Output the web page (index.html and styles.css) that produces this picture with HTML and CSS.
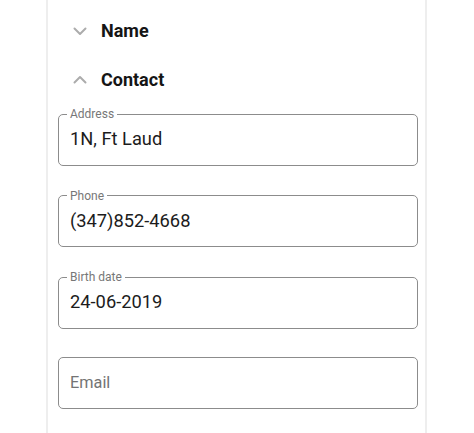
FILE: index.html
```html
<!DOCTYPE html>
<html lang="en">
<head>
<meta charset="utf-8">
<title>Contact form</title>
<link rel="stylesheet" href="styles.css">
</head>
<body>
<main class="panel">
  <div class="section-head">
    <svg class="chevron" width="24" height="24" viewBox="0 0 24 24" aria-hidden="true"><path d="M6.5 9.5 L12 15 L17.5 9.5" fill="none" stroke="#acacac" stroke-width="2" stroke-linecap="round" stroke-linejoin="round"/></svg>
    <span class="section-title">Name</span>
  </div>
  <div class="section-head">
    <svg class="chevron" width="24" height="24" viewBox="0 0 24 24" aria-hidden="true"><path d="M6.5 14.5 L12 9 L17.5 14.5" fill="none" stroke="#acacac" stroke-width="2" stroke-linecap="round" stroke-linejoin="round"/></svg>
    <span class="section-title">Contact</span>
  </div>
  <div class="fields">
    <fieldset class="field">
      <legend class="field-label">Address</legend>
      <div class="field-value">1N, Ft Laud</div>
    </fieldset>
    <fieldset class="field">
      <legend class="field-label">Phone</legend>
      <div class="field-value">(347)852-4668</div>
    </fieldset>
    <fieldset class="field">
      <legend class="field-label">Birth date</legend>
      <div class="field-value">24-06-2019</div>
    </fieldset>
    <fieldset class="field field--empty">
      <div class="field-value field-value--placeholder">Email</div>
    </fieldset>
  </div>
</main>
</body>
</html>
```

FILE: styles.css
```css
html, body {
  margin: 0;
  padding: 0;
  background: #ffffff;
}

body {
  font-family: Roboto, "Noto Sans", "Liberation Sans", sans-serif;
  color: #1c1c1c;
}

.panel {
  box-sizing: border-box;
  margin-left: 46px;
  width: 381px;
  min-height: 433px;
  border-left: 2px solid #eeeeee;
  border-right: 2px solid #eeeeee;
  padding: 6px 7px 0 10px;
}

.section-head {
  display: flex;
  align-items: center;
  gap: 9px;
  height: 49px;
  padding-left: 10px;
}

.chevron {
  display: block;
  flex: none;
}

.section-title {
  font-size: 18px;
  font-weight: 700;
  line-height: 49px;
  color: #151515;
}

.fields {
  display: flex;
  flex-direction: column;
  gap: 23px;
  margin-top: 3px;
}

.field {
  margin: 0;
  min-inline-size: 0;
  border: 1.5px solid #8c8c8c;
  border-radius: 5px;
  padding: 6px 11px 13.5px 11px;
}

.field--empty {
  margin-top: 5px;
  padding-top: 13px;
  padding-bottom: 13.5px;
}

.field-label {
  font-size: 12px;
  line-height: 14px;
  color: #777777;
  padding: 0 3px;
  margin-left: -3px;
}

.field-value {
  font-size: 18.3px;
  line-height: 24px;
  color: #1c1c1c;
}

.field-value--placeholder {
  font-size: 16.3px;
  color: #747474;
}
```
